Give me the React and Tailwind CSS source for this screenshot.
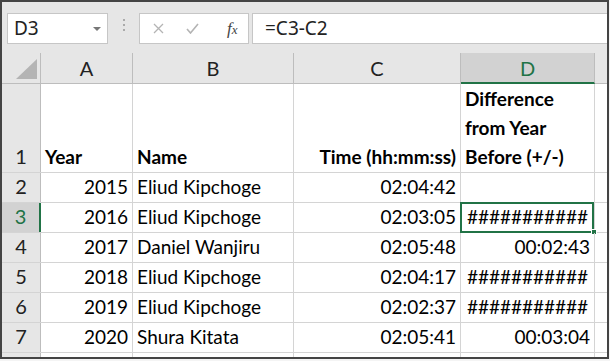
const cols = [
  { id: 'A', w: 'w-[92px]' },
  { id: 'B', w: 'w-[161px]' },
  { id: 'C', w: 'w-[167px]' },
  { id: 'D', w: 'w-[134px]' },
];

const rows = [
  { n: 2, year: '2015', name: 'Eliud Kipchoge', time: '02:04:42', diff: '' },
  { n: 3, year: '2016', name: 'Eliud Kipchoge', time: '02:03:05', diff: '###########', hash: true },
  { n: 4, year: '2017', name: 'Daniel Wanjiru', time: '02:05:48', diff: '00:02:43' },
  { n: 5, year: '2018', name: 'Eliud Kipchoge', time: '02:04:17', diff: '###########', hash: true },
  { n: 6, year: '2019', name: 'Eliud Kipchoge', time: '02:02:37', diff: '###########', hash: true },
  { n: 7, year: '2020', name: 'Shura Kitata', time: '02:05:41', diff: '00:03:04' },
];

const font = { fontFamily: 'Lato, "Liberation Sans", sans-serif' };

function FormulaBar() {
  return (
    <div className="flex h-[51px] items-start bg-[#e6e6e6] pt-[11px]" style={{ fontFamily: '"Noto Sans", "Open Sans", sans-serif' }}>
      <div className="ml-[5px] flex h-[31px] w-[101px] items-center justify-between border border-[#c6c6c6] bg-white pl-[6px] pr-[6px] text-[19px] text-[#222]">
        <span>D3</span>
        <span className="h-0 w-0 border-x-[4px] border-t-[4px] border-x-transparent border-t-[#777]" />
      </div>
      <div className="flex w-[31px] flex-col items-center gap-[3px] pt-[6px]">
        <span className="h-[2px] w-[2px] bg-[#aaa]" />
        <span className="h-[2px] w-[2px] bg-[#aaa]" />
        <span className="h-[2px] w-[2px] bg-[#aaa]" />
      </div>
      <div className="flex h-[31px] w-[110px] items-center border border-[#c6c6c6] bg-white text-[#b0b0b0]">
        <svg className="ml-[13px]" width="11" height="11" viewBox="0 0 11 11">
          <path d="M1 1L10 10M10 1L1 10" stroke="#b4b4b4" strokeWidth="1.3" fill="none" />
        </svg>
        <svg className="ml-[22px]" width="13" height="11" viewBox="0 0 13 11">
          <path d="M1 6L4.5 10L12 1" stroke="#b4b4b4" strokeWidth="1.6" fill="none" />
        </svg>
        <span className="ml-[28px] text-[17px] italic text-[#444]" style={{ fontFamily: '"Liberation Serif", serif' }}>
          f<span className="text-[13px]">x</span>
        </span>
      </div>
      <div className="ml-[3px] flex h-[31px] flex-1 items-center border-y border-l border-[#c6c6c6] bg-white pl-[12px] text-[19px] text-[#222]">
        =C3-C2
      </div>
    </div>
  );
}

function Cell({ w, className = '', children }) {
  return (
    <div className={`${w} flex shrink-0 items-end border-r border-[#d4d4d4] px-[4px] pb-[1px] ${className}`}>
      {children}
    </div>
  );
}

export default function App() {
  return (
    <div className="h-[361px] w-[610px] bg-[#f4f4f4]">
      <div className="h-[359px] w-[609px] overflow-hidden border-2 border-[#444] bg-white text-[19px] text-black" style={font}>
        <FormulaBar />
        {/* column headers */}
        <div className="flex h-[31px] bg-[#e6e6e6]">
          <div className="relative w-[39px] shrink-0 border-r border-b border-[#bdbdbd]">
            <span className="absolute bottom-[4px] right-[3px] h-0 w-0 border-b-[20px] border-l-[21px] border-b-[#b4b4b4] border-l-transparent" />
          </div>
          {cols.map((c) =>
            c.id === 'D' ? (
              <div key={c.id} className={`${c.w} flex shrink-0 items-center justify-center border-r border-b-2 border-r-[#bdbdbd] border-b-[#217346] bg-[#d2d2d2] text-[20px] text-[#217346]`}>
                {c.id}
              </div>
            ) : (
              <div key={c.id} className={`${c.w} flex shrink-0 items-center justify-center border-r border-b border-[#bdbdbd] text-[20px] text-[#222]`}>
                {c.id}
              </div>
            )
          )}
          <div className="flex-1 border-b border-[#bdbdbd]" />
        </div>

        {/* row 1 */}
        <div className="flex h-[89px] border-b border-[#d4d4d4]">
          <div className="flex w-[39px] shrink-0 items-end justify-center border-r border-[#bdbdbd] bg-[#e6e6e6] pb-[1px] text-[20px] text-[#222]">1</div>
          <Cell w="w-[92px]" className="font-bold">Year</Cell>
          <Cell w="w-[161px]" className="font-bold">Name</Cell>
          <Cell w="w-[167px]" className="justify-end font-bold">Time (hh:mm:ss)</Cell>
          <Cell w="w-[134px]" className="font-bold leading-[29px]">
            <span>Difference<br />from Year<br />Before (+/-)</span>
          </Cell>
          <div className="flex-1" />
        </div>

        {rows.map((r) => {
          const sel = r.n === 3;
          return (
            <div key={r.n} className="flex h-[30px] border-b border-[#d4d4d4]">
              <div
                className={`flex w-[39px] shrink-0 items-end justify-center pb-[1px] text-[20px] ${
                  sel ? 'border-r-2 border-[#217346] bg-[#d2d2d2] text-[#217346]' : 'border-r border-[#bdbdbd] bg-[#e6e6e6] text-[#222]'
                }`}
              >
                {r.n}
              </div>
              <Cell w="w-[92px]" className="justify-end">{r.year}</Cell>
              <Cell w="w-[161px]">{r.name}</Cell>
              <Cell w="w-[167px]" className="justify-end">{r.time}</Cell>
              <div className="relative flex w-[134px] shrink-0 items-end justify-end border-r border-[#d4d4d4] px-[4px] pb-[1px]">
                {r.hash ? <span className="w-full text-center">{r.diff}</span> : r.diff}
                {sel && (
                  <>
                    <span className="absolute -left-[1px] -top-[1px] -bottom-[1px] right-0 border-2 border-[#217346]" />
                    <span className="absolute -bottom-[3px] -right-[3px] h-[6px] w-[6px] border border-white bg-[#217346]" />
                  </>
                )}
              </div>
              <div className="flex-1" />
            </div>
          );
        })}

        {/* partial row 8 */}
        <div className="flex h-[10px]">
          <div className="w-[39px] shrink-0 border-r border-[#bdbdbd] bg-[#e6e6e6]" />
          <div className="w-[92px] shrink-0 border-r border-[#d4d4d4]" />
          <div className="w-[161px] shrink-0 border-r border-[#d4d4d4]" />
          <div className="w-[167px] shrink-0 border-r border-[#d4d4d4]" />
          <div className="w-[134px] shrink-0 border-r border-[#d4d4d4]" />
        </div>
      </div>
    </div>
  );
}
